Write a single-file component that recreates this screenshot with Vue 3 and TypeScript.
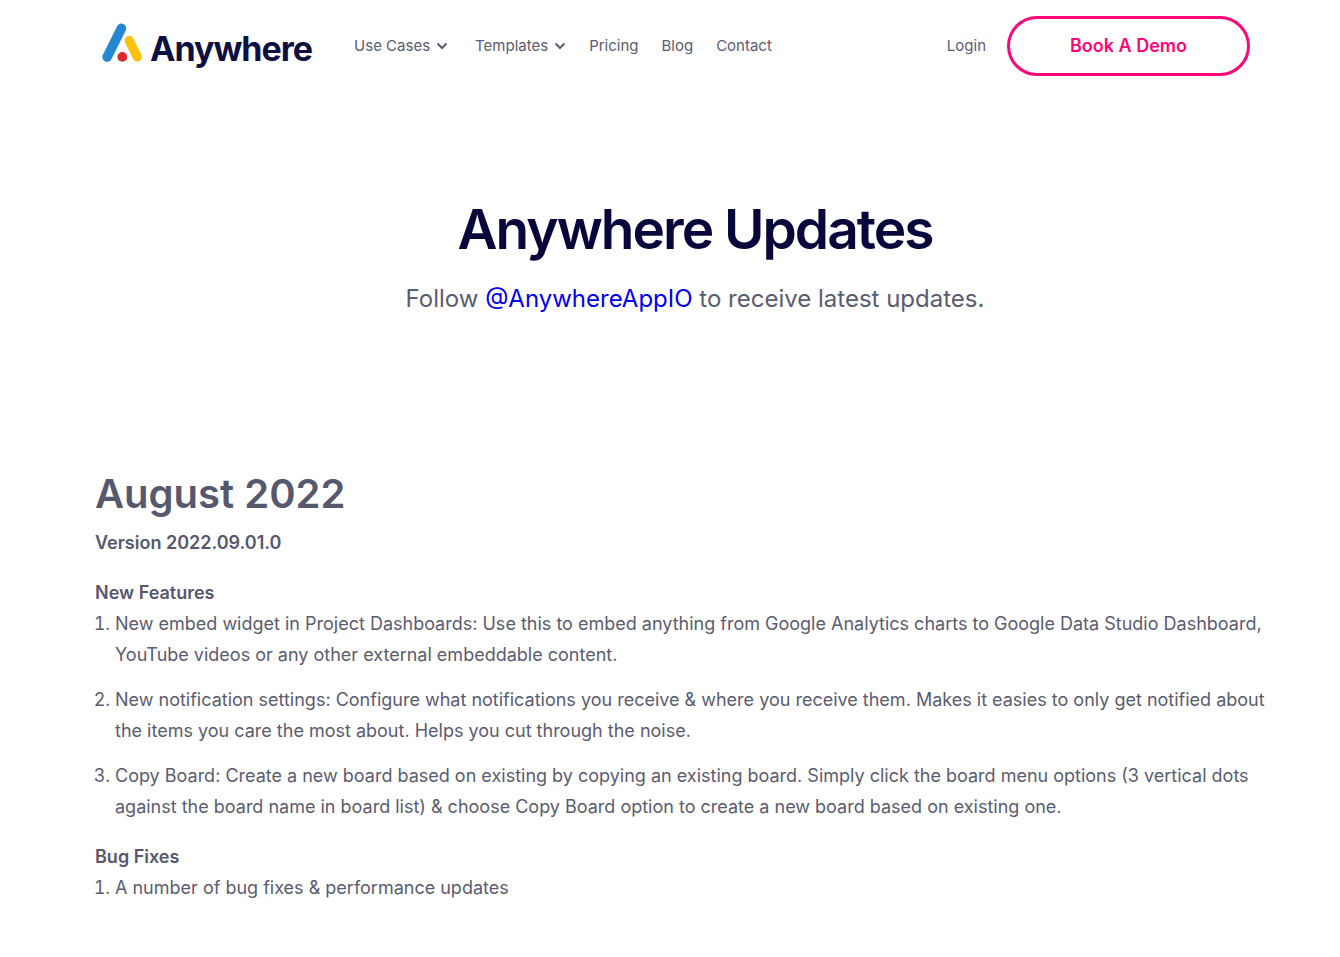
<script setup lang="ts">
interface NavItem { label: string; menu?: boolean }
const nav: NavItem[] = [
  { label: 'Use Cases', menu: true },
  { label: 'Templates', menu: true },
  { label: 'Pricing' },
  { label: 'Blog' },
  { label: 'Contact' },
]
const groups = [
  {
    title: 'New Features',
    items: [
      'New embed widget in Project Dashboards: Use this to embed anything from Google Analytics charts to Google Data Studio Dashboard, YouTube videos or any other external embeddable content.',
      'New notification settings: Configure what notifications you receive & where you receive them. Makes it easies to only get notified about the items you care the most about. Helps you cut through the noise.',
      'Copy Board: Create a new board based on existing by copying an existing board. Simply click the board menu options (3 vertical dots against the board name in board list) & choose Copy Board option to create a new board based on existing one.',
    ],
  },
  { title: 'Bug Fixes', items: ['A number of bug fixes & performance updates'] },
]
</script>

<template>
  <div class="page">
    <header class="header">
      <a class="brand" href="#">
        <svg class="mark" viewBox="0 0 40 40" aria-hidden="true">
          <path d="M19.400 5.300L5.200 33.900" stroke="#2487d3" stroke-width="9.600" stroke-linecap="round" />
          <path d="M27.200 17.400L35.300 34" stroke="#fdc00c" stroke-width="9.200" stroke-linecap="round" />
          <circle cx="20.300" cy="33.900" r="4.900" fill="#dd2a2e" />
        </svg>
        <span class="name">Anywhere</span>
      </a>
      <nav class="nav">
        <template v-for="item in nav" :key="item.label">
          <button v-if="item.menu" class="link menu" type="button">
            {{ item.label }}
            <svg class="chevron" viewBox="0 0 12 12" aria-hidden="true"><path d="M1.500 3.500L6 8L10.500 3.500" /></svg>
          </button>
          <a v-else class="link" href="#">{{ item.label }}</a>
        </template>
      </nav>
      <a class="link login" href="#">Login</a>
      <a class="demo" href="#">Book A Demo</a>
    </header>
    <main>
      <section class="hero">
        <h1>Anywhere Updates</h1>
        <p>Follow <a href="#">@AnywhereAppIO</a> to receive latest updates.</p>
      </section>
      <article class="notes">
        <h2>August 2022</h2>
        <h3>Version 2022.09.01.0</h3>
        <section v-for="group in groups" :key="group.title" class="group">
          <h4>{{ group.title }}</h4>
          <ol>
            <li v-for="item in group.items" :key="item">{{ item }}</li>
          </ol>
        </section>
      </article>
    </main>
  </div>
</template>

<style>
body { margin: 0; background: #fff; }
</style>

<style scoped>
.page { font-family: Inter, "Liberation Sans", sans-serif; color: #5a5c70; }
.header { display: flex; align-items: center; padding: 16px 90px 0 102px; }
.brand { display: flex; align-items: center; gap: 8px; text-decoration: none; color: #0f1042; }
.mark { width: 40px; height: 40px; fill: none; margin-bottom: 6px; }
.name { padding-top: 6px; font-size: 34px; line-height: 40px; font-weight: 700; letter-spacing: -1px; }
.nav { display: flex; gap: 23px; margin-left: 42px; }
.link { font: inherit; font-size: 15px; line-height: 24px; color: inherit; text-decoration: none; }
.menu { display: flex; align-items: center; gap: 6px; padding: 0; border: 0; background: none; }
.menu:first-child { padding-right: 4px; }
.chevron { width: 12px; height: 12px; fill: none; stroke: currentColor; stroke-width: 2; }
.login { margin-left: auto; }
.demo { box-sizing: border-box; width: 243px; height: 60px; margin-left: 21px; border: 3px solid #ff0678; border-radius: 30px; text-align: center; font-size: 18px; font-weight: 600; line-height: 54px; color: #ff0678; text-decoration: none; }
.hero { padding: 117px 0 0 50px; text-align: center; }
h1 { margin: 0; font-size: 55px; line-height: 72px; font-weight: 600; letter-spacing: -2px; color: #09063c; }
.hero p { margin: 16px 0 0; font-size: 24px; line-height: 36px; }
.hero p a { color: #00e; text-decoration: none; }
.notes { padding: 152px 70px 40px 95px; font-size: 18px; line-height: 31px; }
h2 { margin: 0; font-size: 40px; line-height: 50px; font-weight: 600; color: #56586e; }
h3, h4 { margin: 0; font-size: 18px; line-height: 31px; font-weight: 600; color: #56586e; }
h3 { margin-top: 8px; }
.group { margin-top: 19px; }
ol { margin: 0; padding-left: 20px; }
li + li { margin-top: 14px; }
</style>
